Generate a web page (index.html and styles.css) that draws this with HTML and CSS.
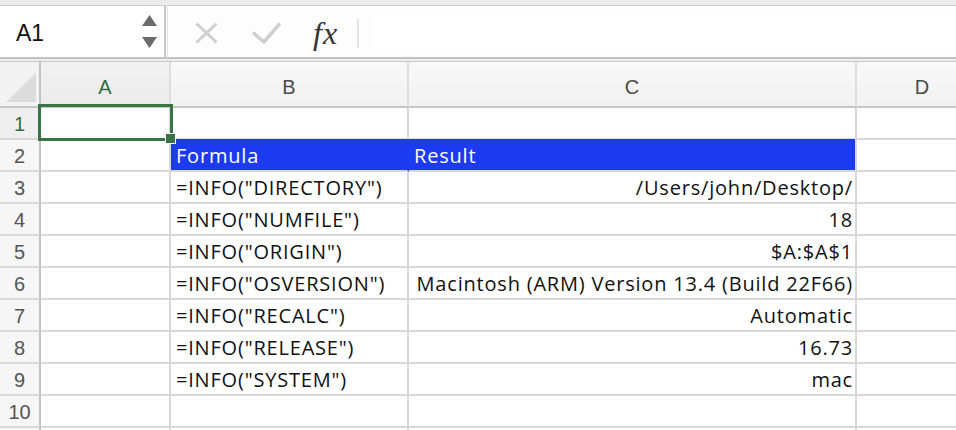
FILE: index.html
```html
<!DOCTYPE html>
<html lang="en">

<head>
    <meta charset="UTF-8">
    <meta name="viewport" content="width=device-width, initial-scale=1.0">
    <title>INFO function</title>
    <link rel="stylesheet" href="styles.css">
</head>

<body>
    <div class="window_top"></div>

    <div class="toolbar">
        <div class="name_box">
            <span class="cell_ref">A1</span>
            <svg class="spinner" width="15" height="33" viewBox="0 0 15 33">
                <polygon points="7.5,0 15,11 0,11" />
                <polygon points="0,22 15,22 7.5,33" />
            </svg>
        </div>
        <div class="formula_bar">
            <svg class="btn_cancel" width="23" height="22" viewBox="0 0 23 22">
                <line x1="1.5" y1="1.5" x2="21.5" y2="20.5" />
                <line x1="21.5" y1="1.5" x2="1.5" y2="20.5" />
            </svg>
            <svg class="btn_enter" width="29" height="22" viewBox="0 0 29 22">
                <polyline points="1,10.5 12,20 28,1.5" />
            </svg>
            <span class="fx">fx</span>
            <span class="bar_sep"></span>
            <div class="formula_input"></div>
        </div>
    </div>
    <div class="splitter"></div>

    <div class="sheet">
        <div class="grid">
            <!-- column headers -->
            <div class="corner">
                <svg width="39" height="44" viewBox="0 0 39 44">
                    <polygon points="6,40 36,40 36,11" />
                </svg>
            </div>
            <div class="col_head active">A</div>
            <div class="col_head">B</div>
            <div class="col_head">C</div>
            <div class="col_head">D</div>

            <div class="row_head active">1</div>
            <div class="cell"></div>
            <div class="cell"></div>
            <div class="cell"></div>
            <div class="cell"></div>

            <div class="row_head">2</div>
            <div class="cell"></div>
            <div class="cell fill first">Formula</div>
            <div class="cell fill">Result</div>
            <div class="cell"></div>

            <div class="row_head">3</div>
            <div class="cell"></div>
            <div class="cell">=INFO("DIRECTORY")</div>
            <div class="cell num">/Users/john/Desktop/</div>
            <div class="cell"></div>

            <div class="row_head">4</div>
            <div class="cell"></div>
            <div class="cell">=INFO("NUMFILE")</div>
            <div class="cell num">18</div>
            <div class="cell"></div>

            <div class="row_head">5</div>
            <div class="cell"></div>
            <div class="cell">=INFO("ORIGIN")</div>
            <div class="cell num">$A:$A$1</div>
            <div class="cell"></div>

            <div class="row_head">6</div>
            <div class="cell"></div>
            <div class="cell">=INFO("OSVERSION")</div>
            <div class="cell num">Macintosh (ARM) Version 13.4 (Build 22F66)</div>
            <div class="cell"></div>

            <div class="row_head">7</div>
            <div class="cell"></div>
            <div class="cell">=INFO("RECALC")</div>
            <div class="cell num">Automatic</div>
            <div class="cell"></div>

            <div class="row_head">8</div>
            <div class="cell"></div>
            <div class="cell">=INFO("RELEASE")</div>
            <div class="cell num">16.73</div>
            <div class="cell"></div>

            <div class="row_head">9</div>
            <div class="cell"></div>
            <div class="cell">=INFO("SYSTEM")</div>
            <div class="cell num">mac</div>
            <div class="cell"></div>

            <div class="row_head">10</div>
            <div class="cell"></div>
            <div class="cell"></div>
            <div class="cell"></div>
            <div class="cell"></div>

            <!-- next row, only its top edge shows -->
            <div class="row_head"></div>
            <div class="cell"></div>
            <div class="cell"></div>
            <div class="cell"></div>
            <div class="cell"></div>
        </div>

        <!-- active cell A1 -->
        <div class="selection"></div>
        <div class="fill_handle"></div>
    </div>
</body>

</html>
```

FILE: styles.css
```css
* {
    box-sizing: border-box;
}

body {
    margin: 0;
    width: 956px;
    height: 430px;
    overflow: hidden;
    background: #fff;
    font-family: 'Open Sans', sans-serif;
}

.window_top {
    height: 6px;
    background: #ebebeb;
    border-bottom: 1px solid #cdcdcd;
}

.toolbar {
    display: flex;
    height: 53px;
    padding-top: 3px;
    background: #fdfdfd;
    border-bottom: 2px solid #c3c3c3;
}

.splitter {
    height: 3px;
    background: #ededed;
    border-bottom: 1px solid #c8c8c8;
}

.name_box {
    width: 166px;
    display: flex;
    align-items: center;
    justify-content: space-between;
    padding: 0 7px 0 16px;
    margin-top: -3px; /* border runs full height */
    padding-top: 3px;
    background: #fff;
    border-right: 2px solid #c8c8c8;
}

.cell_ref {
    font-family: 'Liberation Sans', sans-serif;
    font-size: 23px;
    color: #111;
}

.spinner {
    margin-top: -3px;
    fill: #6b6b6b;
}

.formula_bar {
    flex: 1;
    display: flex;
    align-items: center;
    margin-left: 1px;
    margin-top: -3px;
    padding-top: 3px;
    border-left: 1px solid #e3e3e3;
}

.btn_cancel {
    margin-left: 27px;
    stroke: #cfcfcf;
    stroke-width: 3;
}

.btn_enter {
    margin-left: 34px;
    fill: none;
    stroke: #cfcfcf;
    stroke-width: 3.5;
}

.fx {
    display: inline-block;
    width: 30px;
    margin-left: 32px;
    font-family: 'Liberation Serif', serif;
    font-style: italic;
    font-size: 32px;
    letter-spacing: 1px;
    line-height: 1;
    color: #333;
}

.bar_sep {
    width: 2px;
    height: 29px;
    margin-left: 14px;
    background: #e4e4e4;
}

.formula_input {
    flex: 1;
    height: 37px;
    margin-left: 12px;
    background: #fff;
}

/* sheet */

.sheet {
    position: relative;
}

.grid {
    display: grid;
    grid-template-columns: 41px 130px 238px 448px 132px;
    grid-template-rows: 46px;
    grid-auto-rows: 32px;
}

.corner {
    background: #f3f3f3;
    border-right: 2px solid #c2c2c2;
    border-bottom: 2px solid #c6c6c6;
}

.corner svg {
    display: block;
    fill: #dcdcdc;
}

.col_head {
    padding-top: 13px;
    line-height: 24px;
    text-align: center;
    font-family: 'Liberation Sans', sans-serif;
    font-size: 20px;
    color: #4a4a4a;
    background: linear-gradient(#f9f9f9, #f1f1f1);
    border-right: 2px solid #dedede;
    border-bottom: 2px solid #c6c6c6;
}

.col_head.active {
    color: #2f6f3f;
    background: linear-gradient(#f2f2f2, #ebebeb);
}

.row_head {
    padding-top: 3px;
    line-height: 26px;
    text-align: center;
    font-family: 'Liberation Sans', sans-serif;
    font-size: 20px;
    color: #555;
    background: #f6f6f6;
    border-right: 2px solid #c2c2c2;
    border-bottom: 2px solid #d8d8d8;
}

.row_head.active {
    color: #2f6f3f;
    background: #efefef;
}

.cell {
    padding: 2px 2px 0 5px;
    line-height: 28px;
    font-size: 20px;
    letter-spacing: 0.8px;
    white-space: nowrap;
    overflow: hidden;
    color: #111;
    border-right: 2px solid #d8d8d8;
    border-bottom: 2px solid #d8d8d8;
}

.num {
    text-align: right;
}

.fill {
    margin-top: -1px; /* covers the gridline above */
    padding-top: 3px;
    color: #fff;
    background: #1c3bf1;
}

.fill.first {
    border-right-color: #1c3bf1;
}

.selection {
    position: absolute;
    left: 38px;
    top: 42px;
    width: 135px;
    height: 37px;
    border: 3px solid #3a7346;
    pointer-events: none;
}

.fill_handle {
    position: absolute;
    left: 165px;
    top: 71px;
    width: 11px;
    height: 11px;
    background: #3a7346;
    border: 1px solid #fff;
}
```
